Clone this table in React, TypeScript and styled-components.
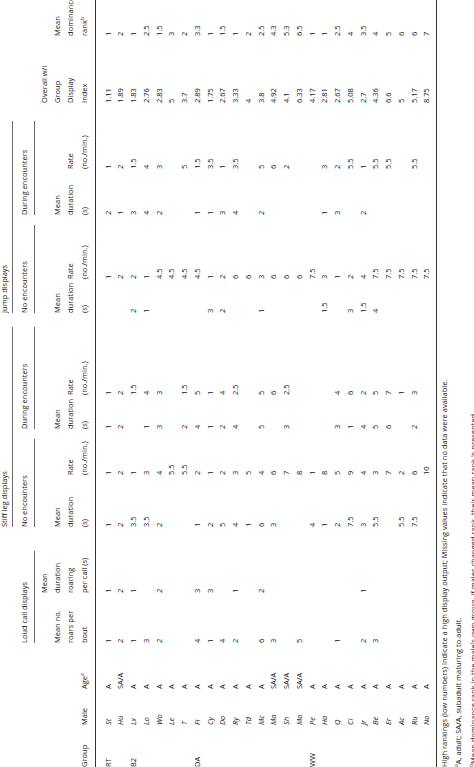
import React from "react";
import styled, { createGlobalStyle } from "styled-components";

const GlobalStyle = createGlobalStyle`
  html, body {
    margin: 0;
    padding: 0;
    background: #fff;
  }
  body {
    font-family: "Open Sans", "Noto Sans", sans-serif;
    color: #141414;
  }
`;

// the printed table is turned a quarter turn, so it is built upright and rotated
const Page = styled.div`
  width: 474px;
  height: 767px;
  overflow: hidden;
  background: #fff;
`;

const Turned = styled.div`
  width: 767px;
  height: 474px;
  transform-origin: 0 0;
  transform: translateY(767px) rotate(-90deg);
`;

const Table = styled.table`
  width: 767px;
  table-layout: fixed;
  border-collapse: collapse;
  font-size: 7.5px;
  line-height: 12.75px;
`;

const Col = styled.col<{ $w: number }>`
  width: ${(p) => p.$w}px;
`;

const SpanRow = styled.tr<{ $h: number }>`
  height: ${(p) => p.$h}px;
`;

const SpanCell = styled.th`
  padding: 0;
  font-weight: 400;
  text-align: left;
  vertical-align: bottom;
  white-space: nowrap;
`;

const Spanner = styled.div<{ $h: number; $pad: number; $gap: number }>`
  height: ${(p) => p.$h}px;
  box-sizing: border-box;
  display: flex;
  align-items: flex-end;
  padding-bottom: ${(p) => p.$pad}px;
  line-height: 9px;
  border-bottom: 1px solid #6a6a6a;
  margin-right: ${(p) => p.$gap}px;
`;

const HeadCell = styled.th`
  height: 60px;
  box-sizing: border-box;
  padding: 0 0 3.5px 0;
  font-weight: 400;
  text-align: left;
  vertical-align: bottom;
  white-space: nowrap;
  line-height: 13.3px;
  border-bottom: 1.5px solid #333;
`;

const Line = styled.div`
  display: block;
`;

const Sup = styled.sup`
  font-size: 5px;
  line-height: 0;
  vertical-align: 3px;
`;

const Spacer = styled.tr<{ $h: number }>`
  height: ${(p) => p.$h}px;
  td {
    padding: 0;
  }
`;

const Row = styled.tr`
  height: 12.75px;
`;

const Cell = styled.td<{ $italic?: boolean }>`
  padding: 0;
  text-align: left;
  vertical-align: middle;
  white-space: nowrap;
  font-style: ${(p) => (p.$italic ? "italic" : "normal")};
`;

const Notes = styled.td`
  padding: 0;
  border-top: 1.5px solid #333;
  line-height: 14.5px;
  white-space: nowrap;
  vertical-align: top;
`;

type Column = { w: number; label: React.ReactNode[] };

const columns: Column[] = [
  { w: 42, label: ["Group"] },
  { w: 36, label: ["Male"] },
  { w: 46, label: [<>Age<Sup>a</Sup></>] },
  { w: 50, label: ["Mean no.", "roars per", "bout"] },
  { w: 66, label: ["Mean", "duration", "roaring", "per call (s)"] },
  { w: 52, label: ["Mean", "duration", "(s)"] },
  { w: 46, label: ["Rate", "(no./min.)"] },
  { w: 34, label: ["Mean", "duration", "(s)"] },
  { w: 82, label: ["Rate", "(no./min.)"] },
  { w: 34, label: ["Mean", "duration", "(s)"] },
  { w: 64, label: ["Rate", "(no./min.)"] },
  { w: 46, label: ["Mean", "duration", "(s)"] },
  { w: 66, label: ["Rate", "(no./min.)"] },
  { w: 67, label: ["Overall w/i", "Group", "Display", "Index"] },
  { w: 36, label: ["Mean", "dominance", <>rank<Sup>b</Sup></>] },
];

// group, male, age, roars/bout, roar duration, stiff leg (no enc: dur, rate; during: dur, rate),
// jump (no enc: dur, rate; during: dur, rate), overall index, dominance rank
const rows: string[][] = [
  ["RT", "St", "A", "1", "1", "1", "1", "1", "1", "", "1", "2", "1", "1.11", "1"],
  ["", "Hu", "SA/A", "2", "2", "2", "2", "2", "2", "", "2", "1", "2", "1.89", "2"],
  ["B2", "Lx", "A", "1", "1", "3.5", "1", "", "1.5", "2", "2", "3", "1.5", "1.83", "1"],
  ["", "Lo", "A", "3", "", "3.5", "3", "1", "4", "1", "1", "4", "4", "2.76", "2.5"],
  ["", "Wo", "A", "2", "2", "2", "4", "3", "3", "", "4.5", "2", "3", "2.83", "1.5"],
  ["", "Le", "A", "", "", "", "5.5", "", "", "", "4.5", "", "", "5", "3"],
  ["", "T", "A", "", "", "", "5.5", "2", "1.5", "", "4.5", "", "5", "3.7", "2"],
  ["DA", "Fi", "A", "4", "3", "1", "2", "4", "5", "", "4.5", "1", "1.5", "2.89", "3.3"],
  ["", "Cy", "A", "1", "3", "2", "1", "1", "1", "3", "1", "1", "3.5", "1.75", "1"],
  ["", "Do", "A", "4", "", "5", "2", "2", "4", "2", "2", "3", "1", "2.67", "1.5"],
  ["", "Ry", "A", "2", "1", "4", "3", "4", "2.5", "", "6", "4", "3.5", "3.33", "1"],
  ["", "Td", "A", "", "", "1", "5", "", "", "", "6", "", "", "4", "2"],
  ["", "Mc", "A", "6", "2", "6", "4", "5", "5", "1", "3", "2", "5", "3.8", "2.5"],
  ["", "Ma", "SA/A", "3", "", "3", "6", "", "6", "", "6", "", "6", "4.92", "4.3"],
  ["", "Sh", "SA/A", "", "", "", "7", "3", "2.5", "", "6", "", "2", "4.1", "5.3"],
  ["", "Mo", "SA/A", "5", "", "", "8", "", "", "", "6", "", "", "6.33", "6.5"],
  ["WW", "Pe", "A", "", "", "4", "1", "", "", "", "7.5", "", "", "4.17", "1"],
  ["", "Ha", "A", "", "", "1", "8", "", "", "1.5", "3", "1", "3", "2.81", "1"],
  ["", "Q", "A", "1", "", "2", "5", "3", "4", "", "1", "3", "2", "2.67", "2.5"],
  ["", "Cl", "A", "", "", "7.5", "9", "1", "6", "3", "2", "", "5.5", "5.08", "4"],
  ["", "Jr", "A", "2", "1", "3", "4", "4", "2", "1.5", "4", "2", "1", "2.7", "3.5"],
  ["", "Be", "A", "3", "", "5.5", "3", "5", "5", "4", "7.5", "", "5.5", "4.36", "4"],
  ["", "Er", "A", "", "", "", "7", "6", "7", "", "7.5", "", "5.5", "6.6", "5"],
  ["", "Ac", "A", "", "", "5.5", "2", "", "1", "", "7.5", "", "", "5", "6"],
  ["", "Ru", "A", "", "", "7.5", "6", "2", "3", "", "7.5", "", "5.5", "5.17", "6"],
  ["", "No", "A", "", "", "", "10", "", "", "", "7.5", "", "", "8.75", "7"],
];

const App: React.FunctionComponent = () => {
  return (
    <Page>
      <GlobalStyle />
      <Turned>
        <Table>
          <colgroup>
            {columns.map((c, i) => (
              <Col key={i} $w={c.w} />
            ))}
          </colgroup>
          <thead>
            <SpanRow $h={13}>
              <SpanCell colSpan={5} />
              <SpanCell colSpan={4}>
                <Spanner $h={13} $pad={3.5} $gap={14}>Stiff leg displays</Spanner>
              </SpanCell>
              <SpanCell colSpan={4}>
                <Spanner $h={13} $pad={3.5} $gap={18}>Jump displays</Spanner>
              </SpanCell>
              <SpanCell colSpan={2} />
            </SpanRow>
            <SpanRow $h={22}>
              <SpanCell colSpan={3} />
              <SpanCell colSpan={2}>
                <Spanner $h={22} $pad={5} $gap={24}>Loud call displays</Spanner>
              </SpanCell>
              <SpanCell colSpan={2}>
                <Spanner $h={22} $pad={5} $gap={10}>No encounters</Spanner>
              </SpanCell>
              <SpanCell colSpan={2}>
                <Spanner $h={22} $pad={5} $gap={14}>During encounters</Spanner>
              </SpanCell>
              <SpanCell colSpan={2}>
                <Spanner $h={22} $pad={5} $gap={10}>No encounters</Spanner>
              </SpanCell>
              <SpanCell colSpan={2}>
                <Spanner $h={22} $pad={5} $gap={18}>During encounters</Spanner>
              </SpanCell>
              <SpanCell colSpan={2} />
            </SpanRow>
            <tr>
              {columns.map((c, i) => (
                <HeadCell key={i}>
                  {c.label.map((l, j) => (
                    <Line key={j}>{l}</Line>
                  ))}
                </HeadCell>
              ))}
            </tr>
          </thead>
          <tbody>
            <Spacer $h={6.5}>
              <td colSpan={15} />
            </Spacer>
            {rows.map((r, i) => (
              <Row key={i}>
                {r.map((v, j) => (
                  <Cell key={j} $italic={j === 1}>
                    {v}
                  </Cell>
                ))}
              </Row>
            ))}
            <Spacer $h={3}>
              <td colSpan={15} />
            </Spacer>
          </tbody>
          <tfoot>
            <tr>
              <Notes colSpan={15}>
                <Line>
                  High rankings (low numbers) indicate a high display output; Missing values indicate that no data were
                  available.
                </Line>
                <Line>
                  <Sup>a</Sup>A, adult; SA/A, subadult maturing to adult.
                </Line>
                <Line>
                  <Sup>b</Sup>Mean dominance rank in the male's own group, if males changed rank, their mean rank is
                  presented.
                </Line>
              </Notes>
            </tr>
          </tfoot>
        </Table>
      </Turned>
    </Page>
  );
};

export default App;
